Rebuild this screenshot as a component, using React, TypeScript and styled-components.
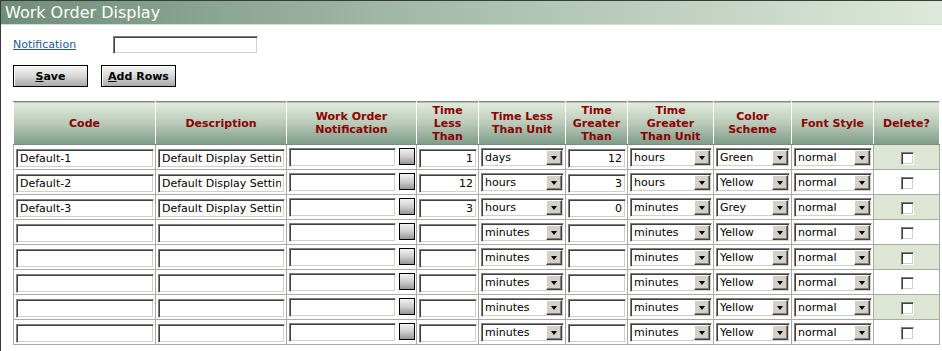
import React from "react";
import styled, { createGlobalStyle } from "styled-components";

const GlobalStyle = createGlobalStyle`
  html, body {
    margin: 0;
    padding: 0;
    background: #ffffff;
    font-family: "DejaVu Sans", Verdana, sans-serif;
  }
  * {
    box-sizing: border-box;
  }
`;

const Page = styled.div`
  min-height: 100vh;
  border-top: 1px solid #3a3a3a;
  border-left: 1px solid #3a3a3a;
`;

const TitleBar = styled.div`
  height: 24px;
  line-height: 24px;
  padding-left: 4px;
  font-size: 16px;
  color: #ffffff;
  background: linear-gradient(to right, #6f8e79 0%, #9fb7a5 40%, #dde9da 100%);
  border-bottom: 1px solid #d0dccd;
`;

const Body = styled.div`
  padding: 11px 0 0 12px;
`;

const FieldRow = styled.div`
  display: flex;
  align-items: center;
  height: 18px;
`;

const FieldLabel = styled.a`
  width: 100px;
  font-size: 11px;
  color: #1d5a96;
  text-decoration: underline;
  cursor: pointer;
  margin-top: -2px;
`;

const classicInset = `
  border: 1px solid;
  border-color: #808080 #ffffff #ffffff #808080;
  box-shadow: inset 1px 1px 0 #404040, inset -1px -1px 0 #d4d0c8;
`;

const TextBox = styled.input<{ $align?: "left" | "right"; $w?: string; $h?: number }>`
  ${classicInset}
  width: ${(p) => p.$w ?? "100%"};
  height: ${(p) => p.$h ?? 19}px;
  padding: 0 3px;
  font-family: "DejaVu Sans", Verdana, sans-serif;
  font-size: 11px;
  color: #000;
  background: #ffffff;
  text-align: ${(p) => p.$align ?? "left"};
  outline: none;
  margin: 0;
`;

const ButtonRow = styled.div`
  display: flex;
  gap: 13px;
  margin-top: 11px;
`;

const Button = styled.button`
  width: 75px;
  height: 22px;
  padding: 0;
  border: 1px solid #000;
  box-shadow: inset 1px 1px 0 #ffffff;
  background: linear-gradient(to bottom, #f6f6f6 0%, #d8d8d8 50%, #a9a9a9 100%);
  font-family: "DejaVu Sans", Verdana, sans-serif;
  font-size: 11px;
  font-weight: bold;
  color: #000;
  cursor: pointer;

  u {
    text-decoration: underline;
  }
`;

const Grid = styled.table`
  margin-top: 14px;
  width: 926px;
  border-collapse: collapse;
  table-layout: fixed;
  border: 1px solid #7d8a7f;
`;

const HeadCell = styled.th`
  height: 43px;
  padding: 0 2px;
  font-size: 11px;
  line-height: 13px;
  font-weight: bold;
  color: #8b0000;
  text-align: center;
  vertical-align: middle;
  background: linear-gradient(to bottom, #e3ebdc 0%, #b9cab8 50%, #7f9c8a 100%);
  border: 1px solid #ffffff;
  border-top-color: #7d8a7f;
  border-bottom-color: #7d8a7f;
`;

const Row = styled.tr`
  height: 25px;
`;

const Cell = styled.td<{ $odd?: boolean; $tint?: boolean }>`
  height: 25px;
  padding: 1px 1px 1px 2px;
  border: 1px solid #a7ada5;
  background: ${(p) => (p.$tint && p.$odd ? "#dde5d5" : "#ffffff")};
  vertical-align: middle;
  text-align: center;
`;

const LookupWrap = styled.div`
  display: flex;
  align-items: center;
  gap: 3px;
`;

const LookupButton = styled.span`
  flex: none;
  width: 16px;
  height: 17px;
  margin-top: -2px;
  border: 1px solid #000;
  background: linear-gradient(to bottom, #f2f2f2 0%, #cfcfcf 50%, #969696 100%);
`;

const Select = styled.div`
  ${classicInset}
  display: flex;
  align-items: center;
  width: 100%;
  height: 19px;
  padding: 0 1px 0 3px;
  background: #ffffff;
  font-size: 11px;
  text-align: left;
  color: #000;
`;

const SelectText = styled.span`
  flex: 1;
  overflow: hidden;
  white-space: nowrap;
`;

const SelectArrow = styled.span`
  flex: none;
  width: 16px;
  height: 15px;
  display: flex;
  align-items: center;
  justify-content: center;
  background: #d4d0c8;
  border: 1px solid;
  border-color: #ffffff #404040 #404040 #ffffff;
  box-shadow: inset -1px -1px 0 #808080;

  &::after {
    content: "";
    width: 0;
    height: 0;
    border-left: 3.5px solid transparent;
    border-right: 3.5px solid transparent;
    border-top: 4px solid #000;
    margin-top: 1px;
  }
`;

const Check = styled.span`
  ${classicInset}
  display: inline-block;
  width: 13px;
  height: 13px;
  background: #ffffff;
  vertical-align: middle;
  margin-top: 1px;
`;

type RowData = {
  code: string;
  desc: string;
  less: string;
  lessUnit: string;
  greater: string;
  greaterUnit: string;
  color: string;
  font: string;
};

const filled: RowData[] = [
  { code: "Default-1", desc: "Default Display Settings", less: "1", lessUnit: "days", greater: "12", greaterUnit: "hours", color: "Green", font: "normal" },
  { code: "Default-2", desc: "Default Display Settings", less: "12", lessUnit: "hours", greater: "3", greaterUnit: "hours", color: "Yellow", font: "normal" },
  { code: "Default-3", desc: "Default Display Settings", less: "3", lessUnit: "hours", greater: "0", greaterUnit: "minutes", color: "Grey", font: "normal" },
];

const blank: RowData = { code: "", desc: "", less: "", lessUnit: "minutes", greater: "", greaterUnit: "minutes", color: "Yellow", font: "normal" };

const rows: RowData[] = [...filled, ...Array.from({ length: 5 }, () => blank)];

const widths = [142, 131, 130, 62, 87, 62, 86, 78, 82, 66];

function Dropdown({ value }: { value: string }) {
  return (
    <Select>
      <SelectText>{value}</SelectText>
      <SelectArrow />
    </Select>
  );
}

export default function App() {
  return (
    <>
      <GlobalStyle />
      <Page>
        <TitleBar>Work Order Display</TitleBar>
        <Body>
          <FieldRow>
            <FieldLabel>Notification</FieldLabel>
            <TextBox $w="145px" $h={18} readOnly />
          </FieldRow>
          <ButtonRow>
            <Button>
              <u>S</u>ave
            </Button>
            <Button>
              <u>A</u>dd Rows
            </Button>
          </ButtonRow>
          <Grid>
            <colgroup>
              {widths.map((w, i) => (
                <col key={i} style={{ width: w }} />
              ))}
            </colgroup>
            <thead>
              <tr>
                <HeadCell>Code</HeadCell>
                <HeadCell>Description</HeadCell>
                <HeadCell>
                  Work Order
                  <br />
                  Notification
                </HeadCell>
                <HeadCell>
                  Time
                  <br />
                  Less
                  <br />
                  Than
                </HeadCell>
                <HeadCell>
                  Time Less
                  <br />
                  Than Unit
                </HeadCell>
                <HeadCell>
                  Time
                  <br />
                  Greater
                  <br />
                  Than
                </HeadCell>
                <HeadCell>
                  Time
                  <br />
                  Greater
                  <br />
                  Than Unit
                </HeadCell>
                <HeadCell>
                  Color
                  <br />
                  Scheme
                </HeadCell>
                <HeadCell>Font Style</HeadCell>
                <HeadCell>Delete?</HeadCell>
              </tr>
            </thead>
            <tbody>
              {rows.map((r, i) => {
                const odd = i % 2 === 0;
                return (
                  <Row key={i}>
                    <Cell>
                      <TextBox defaultValue={r.code} />
                    </Cell>
                    <Cell>
                      <TextBox defaultValue={r.desc} />
                    </Cell>
                    <Cell>
                      <LookupWrap>
                        <TextBox readOnly />
                        <LookupButton />
                      </LookupWrap>
                    </Cell>
                    <Cell>
                      <TextBox $align="right" defaultValue={r.less} />
                    </Cell>
                    <Cell>
                      <Dropdown value={r.lessUnit} />
                    </Cell>
                    <Cell>
                      <TextBox $align="right" defaultValue={r.greater} />
                    </Cell>
                    <Cell>
                      <Dropdown value={r.greaterUnit} />
                    </Cell>
                    <Cell>
                      <Dropdown value={r.color} />
                    </Cell>
                    <Cell>
                      <Dropdown value={r.font} />
                    </Cell>
                    <Cell $odd={odd} $tint>
                      <Check />
                    </Cell>
                  </Row>
                );
              })}
            </tbody>
          </Grid>
        </Body>
      </Page>
    </>
  );
}
